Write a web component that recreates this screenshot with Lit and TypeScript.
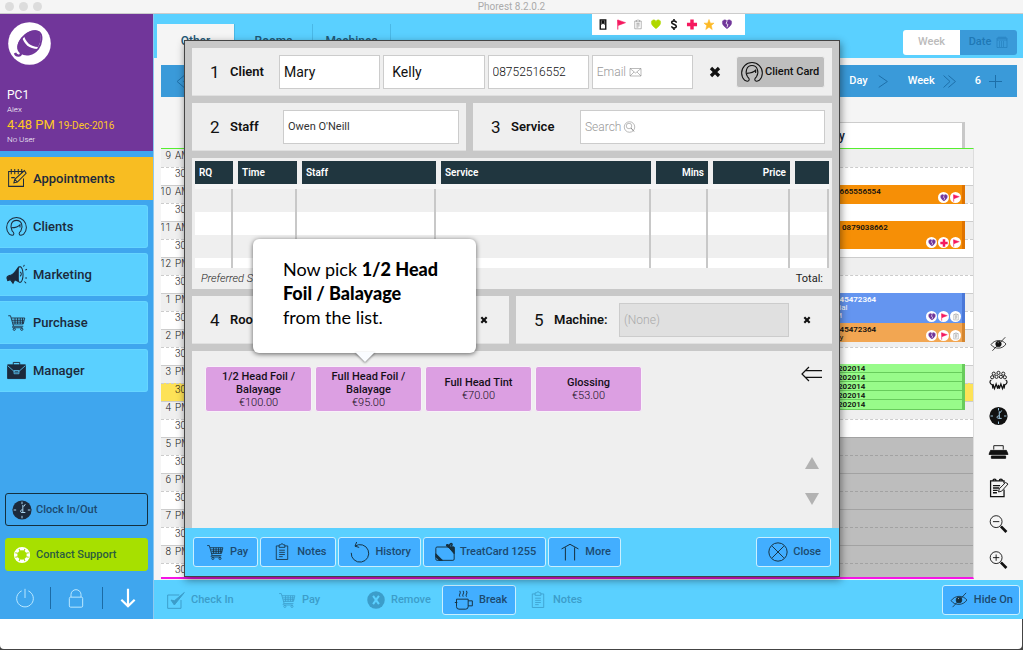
import { LitElement, html, css, svg, nothing, type TemplateResult } from "lit";
import { customElement, state } from "lit/decorators.js";
import { classMap } from "lit/directives/class-map.js";

const line = (body: TemplateResult, box = "0 0 24 24") =>
  html`<svg class="icon" viewBox=${box} fill="none" stroke="currentColor" stroke-width="1.15" aria-hidden="true">${body}</svg>`;

const heartShape = "M12 21C5 16 2 12 2 8a5 5 0 0 1 10-2 5 5 0 0 1 10 2c0 4-3 8-10 13z";

const icons: Record<string, TemplateResult> = {
  planner: line(svg`<path d="M20 12v9H3V4h17M6 1v6M10 1v6M14 1v6M18 1v5"/><path d="m9 17 1-4L21 3l2 3-10 10zM10 13l3 3M6 11h4"/>`),
  client: line(svg`<path d="M4 21a11.300 11.300 0 1 1 16 0c-2 1-5 2-5-1 0-1 1-2 2-3 3-5 1-12-5-12S4 12 7 17c1 1 2 2 2 3 0 3-3 2-5 1z"/><path d="M6 13.500c4 0 8-1 10.500-4M16 10v3"/>`),
  megaphone: line(svg`<path d="M1 16c0-2 3-3 4-3 4-1 6-5 9-9v16l-4-2-2 4-3-4-3 1z" fill="currentColor"/><ellipse cx="16" cy="12" rx="3.500" ry="9"/><path d="M16 9c2 1 2 4 0 5M20 3l1-2M22 7l2-1M22 16h2M21 20l2 2"/>`),
  cart: line(svg`<path d="M1 3h3l4 14h13M5 6h18l-2 8H7M6 9h16M7 11.500h15M10 6v8M13.500 6v8M17 6v8M20 6v8M8 17c-2 0-2 2 0 2h12"/><circle cx="9" cy="21" r="1.500"/><circle cx="19" cy="21" r="1.500"/>`, "-2 -2 28 28"),
  briefcase: line(svg`<path d="M1 5h22v17H1z" fill="currentColor"/><path d="M8 5V2h8v3"/><path d="m1 6 9 8h4l9-8" stroke="#5cc8f8" stroke-width="1"/><path d="M9 12h6v4H9z" stroke="#5cc8f8" stroke-width="1"/>`, "-1 -1 26 26"),
  clock: line(svg`<circle cx="12" cy="12" r="11.500" fill="currentColor" stroke="none"/><path d="M12 2v3M12 19v3M2 12h3M19 12h3M13 6v9M13 12c-3-1-4 3-1 3h4M14 8l2-3" stroke="#a9d4ee" stroke-width="1.200"/>`),
  buoy: line(svg`<circle cx="12" cy="12" r="8.500" stroke-width="4.500"/><g stroke="#a7e000" stroke-width="1.400"><path d="m3 9 5 1M8 4l2 4M16 4l-2 4M21 9l-5 1M21 15l-5-1M16 20l-2-4M8 20l2-4M3 15l5-1"/></g>`),
  power: line(svg`<path d="M8 3.500a10 10 0 1 0 8 0M12 1v11"/>`),
  lock: line(svg`<rect x="4" y="11" width="16" height="12" rx="1.500"/><path d="M6 11V8a6 6 0 0 1 12 0v3"/>`),
  down: line(svg`<path d="M12 1v20M4 14l8 8 8-8" stroke-width="2.600"/>`),
  notes: line(svg`<path d="M8 4H4v19h16V4h-4M8 2.500h2c0-2 4-2 4 0h2V6H8zM8 10h8M8 13h8M8 16h8M8 19h5"/>`, "-2 -1 28 27"),
  history: line(svg`<path d="M6 5a10.500 10.500 0 1 1-4.500 8M8 0 6 5l5 1.500"/>`),
  gift: line(svg`<rect x="1" y="6" width="22" height="16" rx="1.500"/><path d="m1 14 8 8H5l-4-4zM16 6h7v8z" fill="currentColor"/><path d="M17 6c-5-1-3-5 0-1 1-5 6-3 2 0" stroke-width="1.800"/>`),
  more: line(svg`<path d="M1 8 12 2l11 6M6 6v17M18 6v17" stroke-width="1.300"/>`, "-1 -1 26 26"),
  close: line(svg`<circle cx="12" cy="12" r="11"/><path d="m5 5 14 14M19 5 5 19"/>`),
  check: line(svg`<path d="M18 12v10H2V6h14"/><path d="m6 12 4 6L22 3l-12 10z" fill="currentColor"/>`),
  remove: line(svg`<circle cx="12" cy="12" r="10.500" fill="currentColor" stroke="none"/><path d="m8.500 7 7 10M15.500 7l-7 10" stroke="#5ad0ff" stroke-width="2.400"/>`),
  cup: line(svg`<path d="M3 11h14v9q0 3-3 3H6q-3 0-3-3zM17 13h5v6h-5M1 15h3M7 8c-2-3 2-3 0-7M11 8c-2-3 2-3 0-7M15 8c-2-3 2-3 0-7"/>`),
  eye: line(svg`<path d="M1 13c5-8 17-8 22-1-5 8-17 8-22 1zM22 2 3 22"/><circle cx="12" cy="12" r="4" fill="currentColor"/><path d="M11 10h1" stroke="#fff"/>`, "-2 -2 28 28"),
  crowd: line(svg`<circle cx="6" cy="4" r="2"/><circle cx="12" cy="3" r="2"/><circle cx="18" cy="4" r="2"/><circle cx="4" cy="8.500" r="2"/><circle cx="9.500" cy="8" r="2"/><circle cx="15" cy="8" r="2"/><circle cx="20" cy="8.500" r="2"/><path d="M3 12c-3 1-2 5 1 6l1 5M21 12c3 1 2 5-1 6l-1 5M5 17l2 6 2-6 2 6M13 23l2-6 2 6 2-6M11 23l1-5 1 5" stroke-width="1.500"/>`),
  printer: line(svg`<path d="M6 9V4h12v5"/><path d="M2 10h20l2 5H0zM3 17h18v3H3z" fill="currentColor"/>`),
  memo: line(svg`<path d="M19 14v9H2V3h17v3M5 3c0-3 4-3 4 0M13 3c0-3 4-3 4 0M5 9h9M5 12h8M5 15h6M5 18h5" stroke-width="1.600"/><path d="m12 17 1-4 8-8 3 2-8 9z"/>`),
  zoomOut: line(svg`<circle cx="9" cy="9" r="7.500"/><path d="M5 9h8"/><path d="m15 15 7 7" stroke-width="3.500"/>`),
  zoomIn: line(svg`<circle cx="9" cy="9" r="7.500"/><path d="M5 9h8M9 5v8"/><path d="m15 15 7 7" stroke-width="3.500"/>`),
  calendar: line(svg`<path d="M2 4h20v19H2zM2 8h20M6 1v5M10 1v5M14 1v5M18 1v5"/><path d="M6 12h12M6 16h12M6 20h12" stroke-dasharray="2 2" stroke-width="2"/>`),
  mail: line(svg`<path d="M1 5h22v15H1zM1 5l11 9L23 5M1 20l8-8M23 20l-8-8"/>`),
  search: line(svg`<circle cx="12" cy="12" r="10.500"/><circle cx="11" cy="10" r="5.500"/><path d="m15 14 6 7" stroke-width="2"/>`),
  cross: line(svg`<path d="m4 4 16 16M20 4 4 20" stroke-width="6.500"/>`),
  back: line(svg`<path d="M24 8H5M24 16H5M9 4l-8 8 8 8" stroke-width="1.400"/>`, "1 4 23 16"),
  next: line(svg`<path d="m5 1 16 11L5 23" stroke-width="1.800"/>`),
  nextTwo: line(svg`<path d="m1 1 12 11L1 23M10 1l13 11L10 23" stroke-width="1.800"/>`),
  prevTwo: line(svg`<path d="M15 1 2 12l13 11M23 5l-9 7 9 7" stroke-width="1.800"/>`),
  plus: line(svg`<path d="M12 0v24M0 12h24" stroke-width="1.800"/>`),
  phone: line(svg`<path d="M6 2h12v20H6z" stroke-width="3"/><path d="M9 3v9l3-3 3 3V3z" fill="currentColor"/>`),
  flag: line(svg`<path d="M5 2v21" stroke-width="2"/><path d="M5 2 22 8 6 14z" fill="currentColor"/>`),
  heart: line(svg`<path d=${heartShape} fill="currentColor"/>`),
  dollar: line(svg`<path d="M17 8c0-5-10-5-10-.5S17 11 17 16s-10 5-10 0M12 0v4M12 20v4" stroke-width="3.400"/>`),
  medical: line(svg`<path d="M12 1v22M1 12h22" stroke-width="7.500"/>`),
  star: line(svg`<path d="m12 1 3 8h8l-6 5 2 9-7-5-7 5 2-9-6-5h8z" fill="currentColor"/>`),
  broken: line(svg`<path d=${heartShape} fill="currentColor"/><path d="m12 5-2 5 4 2-2 6" stroke="#fff" stroke-width="1.800"/>`),
};

interface Booking {
  tone: string;
  top: number;
  height: number;
  phone: string;
  notes?: string[];
  marks?: string[];
}

const bookings: Booking[] = [
  { tone: "amber", top: 36, height: 19, phone: "5665556554", marks: ["broken", "flag"] },
  { tone: "amber shift", top: 72, height: 28, phone: "0879038662", marks: ["broken", "medical", "flag"] },
  { tone: "blue", top: 144, height: 30, phone: "545472364", notes: ["cial", "M"], marks: ["broken", "flag", "notes"] },
  { tone: "sand", top: 174, height: 19, phone: "545472364", notes: ["dy"], marks: ["broken", "flag", "notes"] },
  { tone: "green", top: 215, height: 9, phone: "202014" },
  { tone: "green", top: 224, height: 9, phone: "202014" },
  { tone: "green", top: 233, height: 9, phone: "202014" },
  { tone: "green", top: 242, height: 9, phone: "202014" },
  { tone: "green", top: 251, height: 10, phone: "202014" },
];

const hours = ["9 AM", "10 AM", "11 AM", "12 PM", "1 PM", "2 PM", "3 PM", "4 PM", "5 PM", "6 PM", "7 PM", "8 PM"];
const menu = [
  ["Appointments", "planner"],
  ["Clients", "client"],
  ["Marketing", "megaphone"],
  ["Purchase", "cart"],
  ["Manager", "briefcase"],
];
const services = [
  ["1/2 Head Foil / Balayage", "€100.00"],
  ["Full Head Foil / Balayage", "€95.00"],
  ["Full Head Tint", "€70.00"],
  ["Glossing", "€53.00"],
];

@customElement("app-root")
export class AppRoot extends LitElement {
  @state() private section = "Appointments";

  static styles = css`
    :host {
      display: flex;
      flex-direction: column;
      position: relative;
      height: 100vh;
      min-height: 650px;
      overflow: hidden;
      background: #444;
      color: #111;
      font: 400 12px/14px Roboto, "Liberation Sans", sans-serif;
    }
    * { box-sizing: border-box; }
    button, input { font: inherit; color: inherit; margin: 0; padding: 0; }
    button { border: 0; background: none; }
    .icon { display: block; width: 20px; height: 20px; flex: none; overflow: visible; }

    .titlebar {
      display: grid;
      grid-template-columns: 1fr auto 1fr;
      align-items: center;
      height: 14px;
      flex: none;
      background: #f5f5f5;
      border-bottom: 1px solid #ccc;
      color: #aaa;
      font-size: 10px;
      line-height: 12px;
    }
    .lights { display: flex; gap: 5px; padding-left: 5px; }
    .lights i { width: 9px; height: 9px; border-radius: 50%; background: #dcdcdc; }

    .body { display: flex; flex: 1; min-height: 0; }
    .bottom { flex: none; height: 30px; margin: 0 1px 1px 0; background: #fff; border-radius: 0 0 4px 4px; }

    .side { display: flex; flex-direction: column; width: 154px; flex: none; background: #3fa6ee; border-right: 1px solid #8dc9f0; }
    .who { height: 137px; padding: 8px 7px 0; background: #71369a; color: #fff; margin-bottom: 6px; }
    .logo { display: block; width: 45px; height: 45px; margin-bottom: 20px; }
    .who p { margin: 0; font-weight: 300; }
    .who .station { font-size: 12px; line-height: 16px; font-weight: 400; }
    .who .tiny { font-size: 8px; line-height: 14px; }
    .who .now { color: #ffc91f; font-size: 13px; line-height: 15px; font-weight: 400; white-space: nowrap; }
    .who .now small { font-size: 10px; }
    .menu { display: flex; flex-direction: column; gap: 5px; }
    .menu button {
      display: flex; align-items: center; gap: 6px; width: 148px; height: 43px; padding: 0 6px;
      background: #5ad0ff; border: 1px solid #66d5ff; border-left: 0; border-radius: 0 3px 3px 0;
      color: #1c2a3c; font-size: 13px; font-weight: 500;
    }
    .menu button.active { width: 153px; background: #f8bd22; border-color: #f8bd22; border-radius: 0; }
    .menu .icon { width: 21px; height: 21px; }
    .wide {
      display: flex; align-items: center; gap: 4px; height: 33px; margin: 0 5px; padding: 0 6px;
      border-radius: 3px; font-size: 11px; font-weight: 500; color: #1c4a70;
    }
    .punch { margin-top: auto; border: 1px solid #14303f; }
    .punch .icon { color: #1c2a3c; }
    .help { margin-top: 12px; background: #a7e000; border: 1px solid #a7e000; color: #2b5d3f; }
    .help .icon { color: #fff; height: 18px; }
    .session { display: flex; align-items: center; height: 48px; color: #bfeaff; }
    .session button { display: flex; justify-content: center; align-items: center; flex: 1; height: 22px; margin-top: 6px; }
    .session button + button { border-left: 1px solid #1c6ba5; }
    .session .strong { color: #fff; }

    .stage { display: flex; flex-direction: column; flex: 1; min-width: 0; background: #f5f5f5; }
    .head { display: flex; height: 44px; flex: none; padding: 0 6px 0 3px; background: #5ad0ff; }
    .tabs { display: flex; align-self: flex-end; height: 34px; }
    .tabs button { width: 78px; border-right: 1px solid #4ab8e6; font-size: 12px; font-weight: 500; color: #1f5876; }
    .tabs button.on { background: #f5f5f5; }
    .legend { display: flex; align-items: center; justify-content: space-between; width: 153px; height: 21px; margin-left: 201px; padding: 0 12px 0 5px; background: #fff; }
    .legend .icon { width: 12px; height: 11px; }
    .toggle { display: flex; align-self: center; height: 25px; margin: 12px 0 0 auto; border-radius: 3px; overflow: hidden; font-size: 11px; font-weight: 500; }
    .toggle button { display: flex; align-items: center; justify-content: center; gap: 5px; width: 57px; background: #fff; color: #bbb; }
    .toggle button + button { background: #3a9ad9; color: #1f78b5; }
    .toggle .icon { width: 12px; height: 14px; }
    .dates { display: flex; align-items: center; flex: none; height: 32px; margin: 7px 6px 0 7px; padding: 0 15px; background: #3a9ad9; color: #fff; font-size: 11px; font-weight: 500; }
    .dates button { display: flex; align-items: center; gap: 8px; margin-left: 19px; }
    .dates button.first { margin: 0 auto 0 0; }
    .dates .icon { width: 13px; height: 13px; color: #1d6ea8; }

    .desk { display: flex; flex: 1; min-height: 0; padding-left: 7px; }
    .cal { display: flex; flex-direction: column; flex: 1; min-width: 0; padding-top: 25px; }
    .colhead { flex: none; height: 26px; margin: 0 9px 0 39px; padding: 6px 117px 0 0; text-align: right; background: #fff; border-top: 1px solid #ccc; border-right: 3px solid #c8c8c8; color: #123; font-weight: 500; }
    .lanes { position: relative; flex: 1; min-height: 0; overflow: hidden; border-top: 1px solid #56ee30; border-right: 1px solid #ddd; border-bottom: 2px solid #f514e6; margin-bottom: 1px; }
    .slot { display: grid; grid-template-columns: 39px 1fr; height: 18px; background: #fff; border-top: 1px dashed #ccc; }
    .slot.hour { background: #efefef; border-top: 1px solid #ccc; }
    .slot.hour:first-child { border-top-color: #efefef; }
    .slot.shut .room { background: #bdbdbd; border-top: 1px solid #a2a2a2; margin-top: -1px; }
    .slot.shut.half .room { border-top-style: dashed; }
    .slot.pick { background: #fde257; }
    .tick { display: flex; gap: 4px; font-size: 10px; line-height: 12px; font-weight: 300; }
    .tick b { width: 10px; font-weight: 300; display: flex; justify-content: flex-end; }
    .jobs { position: absolute; top: 0; right: 8px; width: 165px; }
    .job { position: absolute; left: 0; right: 0; padding-left: 35px; font-size: 8px; line-height: 9px; border-right: 3px solid; }
    .job strong { display: block; font-weight: 600; padding-top: 2px; }
    .job span { display: block; line-height: 8px; }
    .amber { background: #f68f06; border-color: #e07400; }
    .shift { padding-left: 42px; }
    .blue { background: #6495f0; border-color: #4a78d8; color: #fff; }
    .sand { background: #f2a652; border-color: #d48630; }
    .green { background: #98fb8a; border-color: #68cc5c; border-bottom: 1px solid #68cc5c; padding-left: 38px; }
    .green strong { padding-top: 0; }
    .marks { position: absolute; right: 1px; bottom: 1px; display: flex; gap: 1px; }
    .marks i { display: grid; place-items: center; width: 11px; height: 11px; border-radius: 50%; background: #fff; }
    .marks .icon { width: 8px; height: 8px; }
    .c-broken { color: #71369a; } .c-flag, .c-medical { color: #f5195f; }
    .c-heart { color: #b0d800; } .c-star { color: #fdb924; } .c-notes { color: #666; }

    .tools { display: flex; flex-direction: column; justify-content: flex-end; align-items: center; gap: 16px; width: 49px; padding-bottom: 10px; }
    .tools .icon { width: 19px; height: 20px; }

    .actions { display: grid; grid-template-columns: 111px 89px 88px 74px 87px 1fr; align-items: center; flex: none; height: 39px; padding: 0 3px 0 0; background: #5ad0ff; }
    .act { display: flex; align-items: center; gap: 5px; height: 30px; padding: 0 10px 0 11px; border: 1px solid transparent; border-radius: 3px; color: #1c4a70; font-size: 11px; font-weight: 500; white-space: nowrap; }
    .act .icon { color: #16303f; }
    .act.solid { background: #42aeff; border-color: #c9efff; }
    .act.dim, .act.dim .icon { color: #3c9dca; }
    .act.end { justify-self: end; padding: 0 6px; }

    .dialog { position: absolute; top: 40px; left: 184px; right: 183px; bottom: 73px; display: flex; flex-direction: column; background: #c8c8c8; border: 1px solid #444; box-shadow: 1px 3px 8px rgb(0 0 0 / 45%); }
    .form { display: flex; flex-direction: column; gap: 7px; flex: 1; min-height: 0; padding: 7px 7px 0; }
    .pair { display: grid; gap: 7px; }
    .pair.upper { grid-template-columns: 274fr 359fr; }
    .pair.lower { grid-template-columns: 317fr 316fr; }
    .panel { display: flex; align-items: center; height: 48px; padding: 0 7px 0 18px; background: #efefef; border-bottom: 1px solid #e0e0e0; }
    .step { width: 20px; flex: none; font-size: 17px; }
    .name { width: 49px; flex: none; font-size: 13px; font-weight: 600; }
    .name.mid { width: 53px; }
    .name.long { width: 69px; }
    .name.fit { width: 65px; }
    .box { position: relative; flex: 1; min-width: 0; }
    .box + .box { margin-left: 3px; }
    .box input { display: block; width: 100%; height: 34px; padding: 0 4px; background: #fff; border: 1px solid #ccc; border-radius: 0; font-weight: 300; font-size: 12px; }
    .box input.plain { font-size: 11px; font-weight: 400; color: #333; }
    .box input.big { font-size: 14px; font-weight: 400; }
    .box input.in { padding-left: 8px; }
    .box input::placeholder { color: #999; opacity: 1; }
    .box input:disabled { background: #e0e0e0; }
    .box input:disabled::placeholder { color: #aaa; }
    .box .icon { position: absolute; left: 37px; top: 11px; width: 13px; height: 12px; color: #888; }
    .box.seek .icon { left: 43px; }
    .x { width: 43px; flex: none; display: grid; place-items: center; }
    .x .icon { width: 12px; height: 12px; }
    .x.small { width: 36px; }
    .x.small .icon { width: 8px; height: 8px; }
    .card { display: flex; align-items: center; flex: none; gap: 2px; height: 32px; width: 89px; padding: 0 4px; background: #bebebe; border: 1px solid #ececec; border-radius: 3px; font-size: 11px; font-weight: 500; white-space: nowrap; }
    .card .icon { width: 22px; height: 22px; }

    .lines { padding: 3px 3px 0; background: #efefef; }
    table { width: 100%; border-collapse: collapse; table-layout: fixed; }
    th { height: 28px; padding: 0 5px 0 0; vertical-align: top; background: #f5f5f5; text-align: left; }
    th:last-child { padding-right: 0; }
    th span { display: block; height: 23px; padding: 0 4px; background: #20363f; color: #fff; font-size: 10px; line-height: 24px; font-weight: 600; box-shadow: 5px 0 #efefef; }
    th:last-child span { box-shadow: none; }
    th.num { text-align: right; }
    td { height: 23px; padding: 0; background: linear-gradient(#c8c8c8, #c8c8c8) no-repeat right 5px top / 2px 100%; }
    td:last-child { background-position: right top; }
    tr.alt { background-color: #fff; }
    tr.cut td { height: 10px; }
    .c1 { width: 43px; } .c2 { width: 64px; } .c3 { width: 139px; } .c5 { width: 57px; } .c6 { width: 82px; } .c7 { width: 34px; }
    .sum { display: flex; justify-content: space-between; height: 21px; padding: 4px 6px 0; font-size: 11px; font-weight: 300; color: #222; }
    .sum span { font-weight: 400; }

    .picker { display: flex; justify-content: space-between; flex: 1; min-height: 0; padding: 15px 10px 0 13px; background: #efefef; }
    .tiles { display: flex; gap: 3px; align-items: flex-start; }
    .tile { width: 107px; height: 46px; padding: 0 12px; background: #dc9fe2; border: 1px solid #f8f0f9; border-radius: 3px; font-size: 11px; line-height: 13px; font-weight: 500; color: #16101a; }
    .tile small { display: block; font-size: 11px; font-weight: 300; }
    .scroll { display: flex; flex-direction: column; align-items: center; gap: 24px; padding-top: 1px; }
    .scroll .icon { width: 20px; height: 14px; }
    .scroll .up, .scroll .dn { width: 0; height: 0; border: 7px solid transparent; border-top: 0; border-bottom: 12px solid #b2b2b2; }
    .scroll .up { margin-top: 52px; }
    .scroll .dn { border-bottom: 0; border-top: 12px solid #b2b2b2; }
    .foot { display: flex; align-items: center; gap: 2px; flex: none; height: 48px; padding: 0 8px; background: #5ad0ff; }
    .foot .act { padding: 0 9px 0 11px; }
    .foot .act:last-child { margin-left: auto; }

    .tip { position: absolute; top: 198px; left: 68px; width: 223px; height: 114px; padding: 18px 30px; background: #fff; border-radius: 6px; box-shadow: 0 1px 5px rgb(0 0 0 / 60%); font: 400 18px/24px Lato, sans-serif; color: #000; }
    .tip p { margin: 0; white-space: nowrap; }
    .tip b { font-weight: 900; }
    .tip::after { content: ""; position: absolute; left: 102px; top: 113px; border: 10px solid transparent; border-top-color: #fafcff; border-bottom: 0; filter: drop-shadow(0 1px 1px rgb(0 0 0 / 45%)); }
  `;

  private act(label: string, icon: string, tone: string) {
    return html`<button class="act ${tone}" ?disabled=${tone === "dim"}>${icons[icon]}<span>${label}</span></button>`;
  }

  private renderSide() {
    return html`<aside class="side">
      <div class="who">
        <svg class="logo" viewBox="0 0 45 45" aria-hidden="true">
          <circle cx="22.500" cy="21.500" r="21.300" fill="#fff" />
          <path d="M16 15c-6 7-6 13-2 16 5 3 12 2 17-4M16 15c5-5 12-7 16-5 4 3 3 11-1 17" fill="none" stroke="#71369a" stroke-width="1.800" />
          <path d="M15 15c-6 7-6 13-1 16 5 3 12 1 17-4-9 0-14-5-16-12z" fill="#71369a" />
          <path d="M17 13c5-5 12-6 15-3 3 4 2 10-1 15-7 0-13-5-14-12z" fill="#71369a" />
          <path d="M8 31c1 3 6 4 6 0" fill="none" stroke="#71369a" stroke-width="2.400" />
        </svg>
        <p class="station">PC1</p>
        <p class="tiny">Alex</p>
        <p class="now">4:48 PM <small>19-Dec-2016</small></p>
        <p class="tiny">No User</p>
      </div>
      <nav class="menu">
        ${menu.map(([label, icon]) => html`<button
          class=${classMap({ active: this.section === label })}
          @click=${() => (this.section = label)}
        >${icons[icon]}${label}</button>`)}
      </nav>
      <button class="wide punch">${icons.clock}Clock In/Out</button>
      <button class="wide help">${icons.buoy}Contact Support</button>
      <div class="session">
        <button aria-label="Log off">${icons.power}</button>
        <button aria-label="Lock">${icons.lock}</button>
        <button class="strong" aria-label="Minimise">${icons.down}</button>
      </div>
    </aside>`;
  }

  private renderCalendar() {
    return html`<div class="cal">
      <div class="colhead">y</div>
      <div class="lanes">
        ${hours.map((label, i) => {
          const [n, half] = label.split(" ");
          const shut = i >= 8;
          return html`
            <div class=${classMap({ slot: true, hour: true, shut })}><div class="tick"><b>${n}</b><span>${half}</span></div><div class="room"></div></div>
            <div class=${classMap({ slot: true, half: true, shut, pick: i === 6 })}><div class="tick"><b></b><span>30</span></div><div class="room"></div></div>`;
        })}
        <div class="jobs">
          ${bookings.map((b) => html`<div class="job ${b.tone}" style="top:${b.top}px;height:${b.height}px">
            <strong>${b.phone}</strong>${(b.notes ?? []).map((n) => html`<span>${n}</span>`)}
            ${b.marks ? html`<div class="marks">${b.marks.map((m) => html`<i class="c-${m}">${icons[m]}</i>`)}</div>` : nothing}
          </div>`)}
        </div>
      </div>
    </div>`;
  }

  private renderDialog() {
    return html`<section class="dialog" role="dialog" aria-label="New appointment">
      <div class="form">
        <div class="panel">
          <span class="step">1</span><span class="name">Client</span>
          <div class="box"><input class="big" aria-label="First name" .value=${"Mary"} /></div>
          <div class="box"><input class="big in" aria-label="Last name" .value=${"Kelly"} /></div>
          <div class="box"><input aria-label="Mobile" .value=${"08752516552"} /></div>
          <div class="box"><input aria-label="Email" placeholder="Email" />${icons.mail}</div>
          <button class="x" aria-label="Clear client">${icons.cross}</button>
          <button class="card">${icons.client}Client Card</button>
        </div>
        <div class="pair upper">
          <div class="panel">
            <span class="step">2</span><label class="name mid" for="staff">Staff</label>
            <div class="box"><input id="staff" class="plain" .value=${"Owen O'Neill"} /></div>
          </div>
          <div class="panel">
            <span class="step">3</span><label class="name long" for="service">Service</label>
            <div class="box seek"><input id="service" placeholder="Search" />${icons.search}</div>
          </div>
        </div>
        <div class="lines">
          <table>
            <colgroup><col class="c1" /><col class="c2" /><col class="c3" /><col /><col class="c5" /><col class="c6" /><col class="c7" /></colgroup>
            <thead><tr>
              <th><span>RQ</span></th><th><span>Time</span></th><th><span>Staff</span></th><th><span>Service</span></th>
              <th class="num"><span>Mins</span></th><th class="num"><span>Price</span></th><th><span></span></th>
            </tr></thead>
            <tbody>
              ${["", "alt", "", "alt cut"].map((c) => html`<tr class=${c}>${[1, 2, 3, 4, 5, 6, 7].map(() => html`<td></td>`)}</tr>`)}
            </tbody>
          </table>
          <div class="sum"><em>Preferred Staff:</em><span>Total:</span></div>
        </div>
        <div class="pair lower">
          <div class="panel">
            <span class="step">4</span><label class="name mid" for="room">Room:</label>
            <div class="box"><input id="room" placeholder="(None)" disabled /></div>
            <button class="x small" aria-label="Clear room">${icons.cross}</button>
          </div>
          <div class="panel">
            <span class="step">5</span><label class="name fit" for="machine">Machine:</label>
            <div class="box"><input id="machine" placeholder="(None)" disabled /></div>
            <button class="x small" aria-label="Clear machine">${icons.cross}</button>
          </div>
        </div>
        <div class="picker">
          <div class="tiles">${services.map(([n, p]) => html`<button class="tile">${n}<small>${p}</small></button>`)}</div>
          <div class="scroll">
            <button aria-label="Back">${icons.back}</button>
            <button class="up" aria-label="Scroll up"></button>
            <button class="dn" aria-label="Scroll down"></button>
          </div>
        </div>
      </div>
      <div class="foot">
        ${this.act("Pay", "cart", "solid")}${this.act("Notes", "notes", "solid")}${this.act("History", "history", "solid")}
        ${this.act("TreatCard 1255", "gift", "solid")}${this.act("More", "more", "solid")}${this.act("Close", "close", "solid")}
      </div>
      <div class="tip"><p>Now pick <b>1/2 Head<br />Foil / Balayage</b><br />from the list.</p></div>
    </section>`;
  }

  render() {
    return html`
      <header class="titlebar"><div class="lights"><i></i><i></i><i></i></div><span>Phorest 8.2.0.2</span></header>
      <div class="body">
        ${this.renderSide()}
        <main class="stage">
          <div class="head">
            <div class="tabs"><button class="on">Other</button><button>Rooms</button><button>Machines</button></div>
            <div class="legend">
              ${["phone", "flag", "notes", "heart", "dollar", "medical", "star", "broken"].map((m) => html`<span class="c-${m}">${icons[m]}</span>`)}
            </div>
            <div class="toggle"><button>Week</button><button>Date ${icons.calendar}</button></div>
          </div>
          <div class="dates">
            <button class="first" aria-label="Back">${icons.prevTwo}</button>
            <button>Day ${icons.next}</button><button>Week ${icons.nextTwo}</button><button>6 ${icons.plus}</button>
          </div>
          <div class="desk">
            ${this.renderCalendar()}
            <div class="tools">
              ${["eye", "crowd", "clock", "printer", "memo", "zoomOut", "zoomIn"].map((m) => html`<button aria-label=${m}>${icons[m]}</button>`)}
            </div>
          </div>
          <div class="actions">
            ${this.act("Check In", "check", "dim")}${this.act("Pay", "cart", "dim")}${this.act("Remove", "remove", "dim")}
            ${this.act("Break", "cup", "solid")}${this.act("Notes", "notes", "dim")}${this.act("Hide On", "eye", "solid end")}
          </div>
        </main>
      </div>
      <div class="bottom"></div>
      ${this.renderDialog()}
    `;
  }
}
